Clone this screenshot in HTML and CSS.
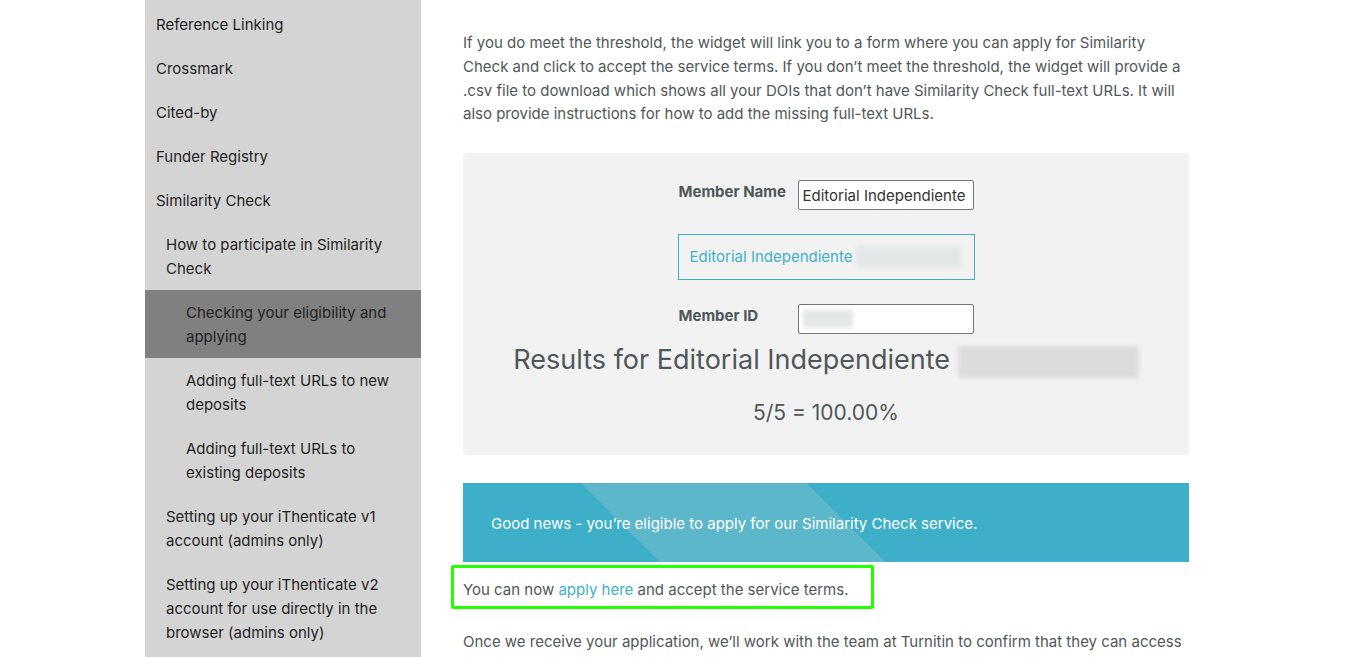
FILE: index.html
```html
<html>

<head>
  <title>Checking your eligibility and applying</title>
  <meta charset="UTF-8">
  <meta name="viewport" content="width=device-width, initial-scale=1.0">
  <link rel="stylesheet" href="styles.css">
</head>

<body>
  <div id="page">
    <nav id="sidebar">
      <a class="nav-item">Reference Linking</a>
      <a class="nav-item">Crossmark</a>
      <a class="nav-item">Cited-by</a>
      <a class="nav-item">Funder Registry</a>
      <a class="nav-item">Similarity Check</a>
      <a class="nav-item sub">How to participate in Similarity Check</a>
      <a class="nav-item subsub active">Checking your eligibility and applying</a>
      <a class="nav-item subsub">Adding full-text URLs to new deposits</a>
      <a class="nav-item subsub">Adding full-text URLs to existing deposits</a>
      <a class="nav-item sub">Setting up your iThenticate v1 account (admins only)</a>
      <a class="nav-item sub">Setting up your iThenticate v2 account for use directly in the browser (admins only)</a>
    </nav>

    <main id="content">
      <p>
        If you do meet the threshold, the widget will link you to a form where you can apply for Similarity
        Check and click to accept the service terms. If you don’t meet the threshold, the widget will provide a
        .csv file to download which shows all your DOIs that don’t have Similarity Check full-text URLs. It will
        also provide instructions for how to add the missing full-text URLs.
      </p>

      <div id="widget">
        <div class="widget-form">
          <div class="field">
            <label for="member-name">Member Name</label>
            <input type="text" id="member-name" value="Editorial Independiente" />
          </div>
          <div class="suggestion">
            Editorial Independiente <span class="redacted small"></span>
          </div>
          <div class="field">
            <label for="member-id">Member ID</label>
            <div class="fake-input"><span class="redacted tiny"></span></div>
          </div>
        </div>
        <h2>Results for Editorial Independiente <span class="redacted large"></span></h2>
        <div class="score">5/5 = 100.00%</div>
      </div>

      <div class="banner">Good news - you’re eligible to apply for our Similarity Check service.</div>

      <p class="highlight">You can now <a href="#">apply here</a> and accept the service terms.</p>

      <p>Once we receive your application, we’ll work with the team at Turnitin to confirm that they can access</p>
    </main>
  </div>
</body>

</html>
```

FILE: styles.css
```css
* {
  font-family: Inter, 'Liberation Sans', sans-serif;
  box-sizing: border-box;
}

body {
  margin: 0;
  background-color: #fff;
  overflow: hidden;
}

#page {
  display: flex;
  min-height: 657px;
}

#sidebar {
  display: flex;
  flex-direction: column;
  width: 276px;
  margin-left: 145px;
  padding-top: 2px;
  background-color: #d4d4d4;
}

.nav-item {
  font-size: 15px;
  line-height: 24px;
  color: #1f1f1f;
  padding: 11px 12px 9px 11px;
}

.nav-item.sub {
  padding-left: 21px;
}

.nav-item.subsub {
  padding-left: 41px;
}

.nav-item.active {
  background-color: #808080;
}

#content {
  width: 726px;
  margin-left: 42px;
  padding-top: 31px;
  color: #4f5858;
  font-size: 15px;
  line-height: 23.75px;
}

#content p {
  margin: 0;
}

#content a {
  color: #3eb1c8;
  text-decoration: none;
}

#widget {
  margin: 27px 0 28px 0;
  padding: 27px 0 30px 0;
  background-color: #f2f2f2;
  border-radius: 4px;
  text-align: center;
}

.widget-form {
  display: flex;
  flex-direction: column;
  gap: 24px;
  width: 297px;
  margin: 0 auto;
  text-align: left;
}

.field {
  display: flex;
}

.field label {
  width: 120px;
  padding-left: 1px;
  font-weight: bold;
  font-size: 15px;
  line-height: 24px;
  color: #4f5858;
}

.field input,
.fake-input {
  width: 176px;
  height: 30px;
  border: 1px solid #777;
  border-radius: 2px;
  background-color: #fff;
  padding: 0 4px;
  font-size: 15px;
  color: #333;
}

.fake-input {
  display: flex;
  align-items: center;
}

.suggestion {
  height: 46px;
  border: 1px solid #3eb1c8;
  padding: 0 11px;
  display: flex;
  align-items: center;
  gap: 4px;
  color: #3eb1c8;
  font-size: 15px;
}

.redacted {
  display: inline-block;
  background-color: #e4e7e8;
  filter: blur(2px);
}

.redacted.small {
  width: 106px;
  height: 22px;
}

.redacted.tiny {
  width: 50px;
  height: 18px;
}

.redacted.large {
  width: 181px;
  height: 32px;
  background-color: #dcdcdc;
  vertical-align: middle;
}

#widget h2 {
  margin: 10px 0 0 0;
  font-weight: normal;
  font-size: 27px;
  line-height: 32px;
  color: #4f5858;
}

.score {
  margin-top: 23px;
  font-size: 21px;
  line-height: 24px;
}

.banner {
  height: 79px;
  display: flex;
  align-items: center;
  padding: 3px 0 0 28px;
  color: #fff;
  font-size: 15px;
  background-color: #3eafc9;
  background-image: linear-gradient(45deg, transparent 139px, #5cb7ca 139px, #5cb7ca 299px, transparent 299px);
}

#content p.highlight {
  width: 423px;
  margin: 3px 0 0 -12px;
  padding: 10px 9px 5px 9px;
  border: 3px solid #22ff00;
  border-radius: 2px;
}

#content p.highlight + p {
  margin-top: 21px;
}
```
